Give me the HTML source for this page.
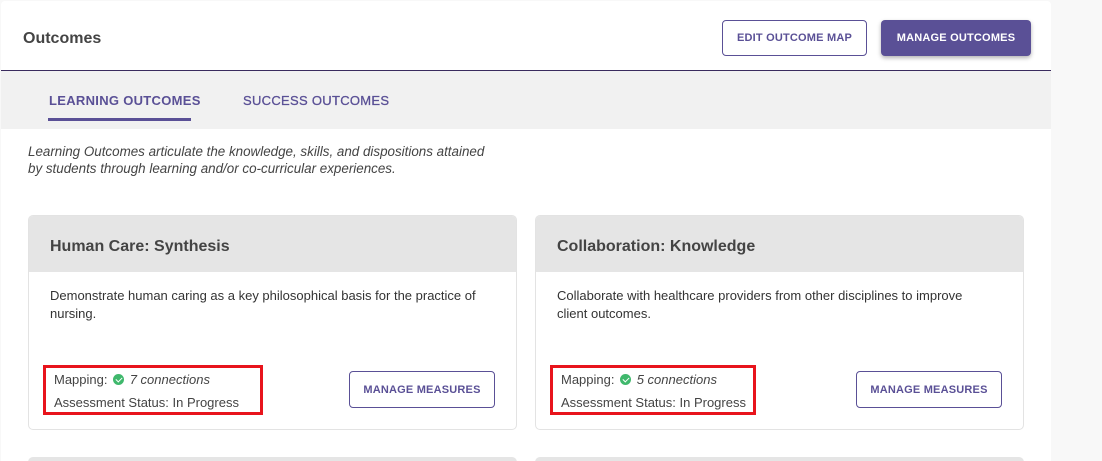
<!DOCTYPE html>
<html><head><style>
*{box-sizing:border-box;margin:0;padding:0}
html,body{width:1102px;height:461px;overflow:hidden}
body{background:#f8f8f8;font-family:"Liberation Sans",sans-serif;color:#333;position:relative}
.panel{position:absolute;left:1px;top:1px;width:1050px;height:470px;background:#fff;border-radius:4px}
.title{position:absolute;left:22px;top:29px;font-size:16px;font-weight:bold;color:#444}
.btn{position:absolute;height:36px;border-radius:4px;font-size:11px;font-weight:bold;display:flex;align-items:center;justify-content:center;letter-spacing:.2px}
.outl{border:1px solid #5a5096;color:#5a5096;background:#fff}
.fill{background:#5a5096;color:#fff;box-shadow:0 2px 4px rgba(0,0,0,.3)}
.line{position:absolute;left:0;top:69px;width:1050px;height:1px;background:#3a2b5e}
.tabs{position:absolute;left:0;top:70px;width:1050px;height:58px;background:#f1f1f1}
.tab{position:absolute;top:22px;font-size:13px;font-weight:bold;color:#5a5096;letter-spacing:.3px}
.ul{position:absolute;left:47px;top:47px;width:143px;height:3px;background:#5a5096}
.desc{position:absolute;left:27px;top:142px;font-size:13.4px;font-style:italic;color:#444;line-height:17px}
.card{position:absolute;top:215px;width:489px;height:215px;border:1px solid #e3e3e3;border-radius:5px;overflow:hidden;background:#fff}
.ch{height:56px;background:#e5e5e5;padding:22px 21px;font-size:16px;font-weight:bold;color:#444}
.cb{padding:15px 21px;font-size:13px;line-height:18px;color:#333}
.meta{position:absolute;left:14px;top:149px;height:50px;border:3px solid #e8141c;padding:0 0 0 8px;font-size:13px;line-height:23px;color:#444;white-space:nowrap}
.chk{display:inline-block;width:11px;height:11px;border-radius:50%;background:#3fb86c;vertical-align:-1px;margin:0 2px;position:relative}
.chk:after{content:"";position:absolute;left:3.5px;top:2px;width:3px;height:5px;border:solid #fff;border-width:0 1.5px 1.5px 0;transform:rotate(45deg)}
.mm{left:320px;top:155px;width:146px;height:37px;font-size:11px}
.card2{position:absolute;top:457px;width:489px;height:20px;background:#e5e5e5;border-radius:5px}
</style></head><body>
<div class="panel">
<div class="title">Outcomes</div>
<div class="btn outl" style="left:721px;top:19px;width:145px">EDIT OUTCOME MAP</div>
<div class="btn fill" style="left:880px;top:19px;width:150px">MANAGE OUTCOMES</div>
<div class="line"></div>
<div class="tabs">
<div class="tab" style="left:48px">LEARNING OUTCOMES</div>
<div class="tab" style="left:242px;font-weight:normal;-webkit-text-stroke:.3px #5a5096">SUCCESS OUTCOMES</div>
<div class="ul"></div>
</div>
<div class="desc">Learning Outcomes articulate the knowledge, skills, and dispositions attained<br>by students through learning and/or co-curricular experiences.</div>
</div>
<div class="card" style="left:28px">
<div class="ch">Human Care: Synthesis</div>
<div class="cb">Demonstrate human caring as a key philosophical basis for the practice of nursing.</div>
<div class="meta" style="width:220px">Mapping: <span class="chk"></span> <i>7 connections</i><br>Assessment Status: In Progress</div>
<div class="btn outl mm">MANAGE MEASURES</div>
</div>
<div class="card" style="left:535px">
<div class="ch">Collaboration: Knowledge</div>
<div class="cb">Collaborate with healthcare providers from other disciplines to improve client&nbsp;outcomes.</div>
<div class="meta" style="width:206px">Mapping: <span class="chk"></span> <i>5 connections</i><br>Assessment Status: In Progress</div>
<div class="btn outl mm">MANAGE MEASURES</div>
</div>
<div class="card2" style="left:28px"></div>
<div class="card2" style="left:535px"></div>
</body></html>
